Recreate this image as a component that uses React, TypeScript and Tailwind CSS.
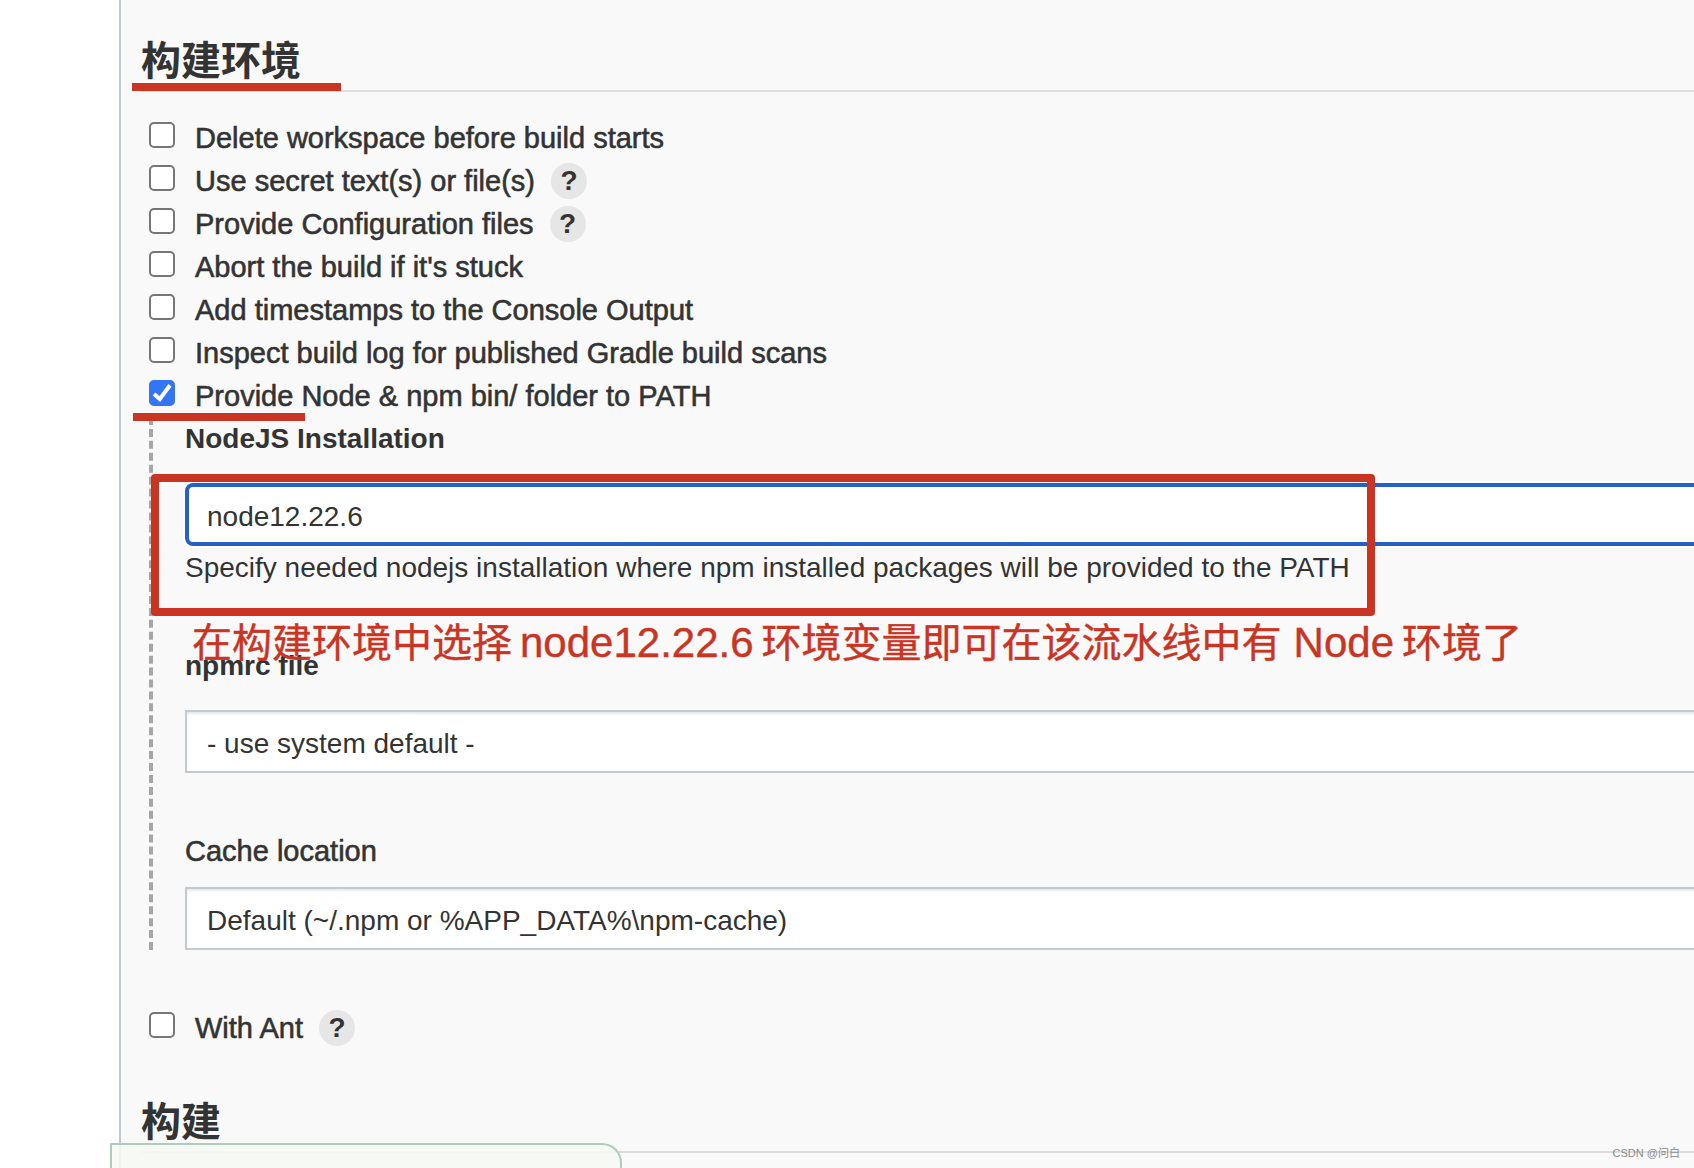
import { useId, useState } from "react";
import type { ReactNode } from "react";
import clsx from "clsx";

const wrappers = [
  { label: "Delete workspace before build starts" },
  { label: "Use secret text(s) or file(s)", help: true },
  { label: "Provide Configuration files", help: true },
  { label: "Abort the build if it's stuck" },
  { label: "Add timestamps to the Console Output" },
  { label: "Inspect build log for published Gradle build scans" },
  { label: "Provide Node & npm bin/ folder to PATH", checked: true },
];

function SectionHeader({ children }: { children: ReactNode }) {
  return (
    <h2 className="border-b-2 border-[#dddddd] pt-px pb-[7px] text-[40px] leading-11 font-bold">
      {children}
    </h2>
  );
}

function OptionRow({
  label,
  help,
  checked = false,
}: {
  label: string;
  help?: boolean;
  checked?: boolean;
}) {
  const id = useId();
  const [on, setOn] = useState(checked);

  return (
    <div className="flex h-[43px] items-start pt-0.5 pl-2">
      <span className="mt-0.5 grid size-[26px] shrink-0">
        <input
          id={id}
          type="checkbox"
          checked={on}
          onChange={(e) => setOn(e.target.checked)}
          className="col-start-1 row-start-1 size-[26px] appearance-none rounded-[5px] border-2 border-[#767676] bg-white checked:border-[#3275f6] checked:bg-[#3275f6]"
        />
        {on && (
          <svg
            viewBox="0 0 26 26"
            className="pointer-events-none col-start-1 row-start-1 size-[26px]"
            fill="none"
            stroke="#fff"
            strokeWidth="4"
          >
            <path d="M5 14 L10.8 19 L21 5.2" />
          </svg>
        )}
      </span>
      <label
        htmlFor={id}
        className="ml-5 text-[29px] leading-9 [-webkit-text-stroke:0.02em]"
      >
        {label}
      </label>
      {help && (
        <button
          type="button"
          aria-label={`Help for ${label}`}
          className="ml-4 size-9 rounded-full bg-[#e6e6e6] text-center leading-9 font-bold"
        >
          ?
        </button>
      )}
    </div>
  );
}

function SelectField({
  label,
  option,
  focused,
  className,
  labelClassName,
}: {
  label: string;
  option: string;
  focused?: boolean;
  className?: string;
  labelClassName: string;
}) {
  const id = useId();

  return (
    <div className={clsx("flex flex-col", className)}>
      <label htmlFor={id} className={clsx("leading-[38px]", labelClassName)}>
        {label}
      </label>
      <select
        id={id}
        className={clsx(
          "-mr-3 h-[63px] appearance-none bg-white pt-1 outline-none",
          focused
            ? "rounded-lg border-4 border-[#265fc8] pl-[18px] ring-2 ring-white"
            : "border-2 border-[#c3cacf] pl-5 shadow-[inset_0_2px_2px_#e9e9e9]",
        )}
      >
        <option>{option}</option>
      </select>
    </div>
  );
}

export default function App() {
  return (
    <div className="relative min-h-screen overflow-hidden bg-white pl-[119px] font-['Liberation_Sans','Noto_Sans_CJK_SC',sans-serif] text-[28px] text-[#333333]">
      <main className="min-h-screen border-l-2 border-[#c3cacf] bg-[#f9f9f9] pt-[38px] pb-3 pl-5">
        <section className="relative">
          <SectionHeader>构建环境</SectionHeader>
          <div className="absolute top-[45px] -left-[9px] h-2 w-[209px] bg-[#c93423]" />
        </section>

        <div className="mt-[26px]">
          {wrappers.map((w) => (
            <OptionRow key={w.label} {...w} />
          ))}
        </div>

        <div className="relative -mt-0.5 ml-2 border-l-4 border-dashed border-[#a6a6a6] pt-[3px] pl-8">
          <SelectField
            label="NodeJS Installation"
            option="node12.22.6"
            focused
            labelClassName="mb-[25px] font-bold"
          />
          <p className="mt-[3px] leading-[38px] whitespace-nowrap">
            Specify needed nodejs installation where npm installed packages will
            be provided to the PATH
          </p>
          <SelectField
            label="npmrc file"
            option="- use system default -"
            className="mt-[60px]"
            labelClassName="mb-[25px] font-bold"
          />
          <SelectField
            label="Cache location"
            option="Default (~/.npm or %APP_DATA%\npm-cache)"
            className="mt-[59px]"
            labelClassName="mb-[17px] text-[29px] [-webkit-text-stroke:0.02em]"
          />

          {/* red marker annotations */}
          <div className="absolute -top-1 -left-5 h-2 w-[172px] bg-[#c93423]" />
          <div className="pointer-events-none absolute top-[57px] -left-0.5 h-[142px] w-[1224px] rounded-sm border-8 border-[#c93423]" />
          <p className="pointer-events-none absolute top-[202px] left-[39px] text-[40px] leading-[48px] whitespace-nowrap text-[#c93423] [-webkit-text-stroke:0.01em]">
            在构建环境中选择
            <span className="mx-2 text-[42px]">node12.22.6</span>
            环境变量即可在该流水线中有
            <span className="mr-2 ml-3 text-[42px]">Node</span>
            环境了
          </p>
        </div>

        <div className="mt-[58px] mb-12">
          <OptionRow label="With Ant" help />
        </div>

        <SectionHeader>构建</SectionHeader>
      </main>

      <div className="absolute bottom-0 left-[110px] h-[25px] w-[512px] rounded-tr-[20px] border-2 border-b-0 border-[#aecbbb] bg-[#f7faf3]/85" />
      <span className="absolute right-[14px] bottom-[7px] text-[11px] leading-4 text-[#8a8a8a]">
        CSDN @问白
      </span>
    </div>
  );
}
